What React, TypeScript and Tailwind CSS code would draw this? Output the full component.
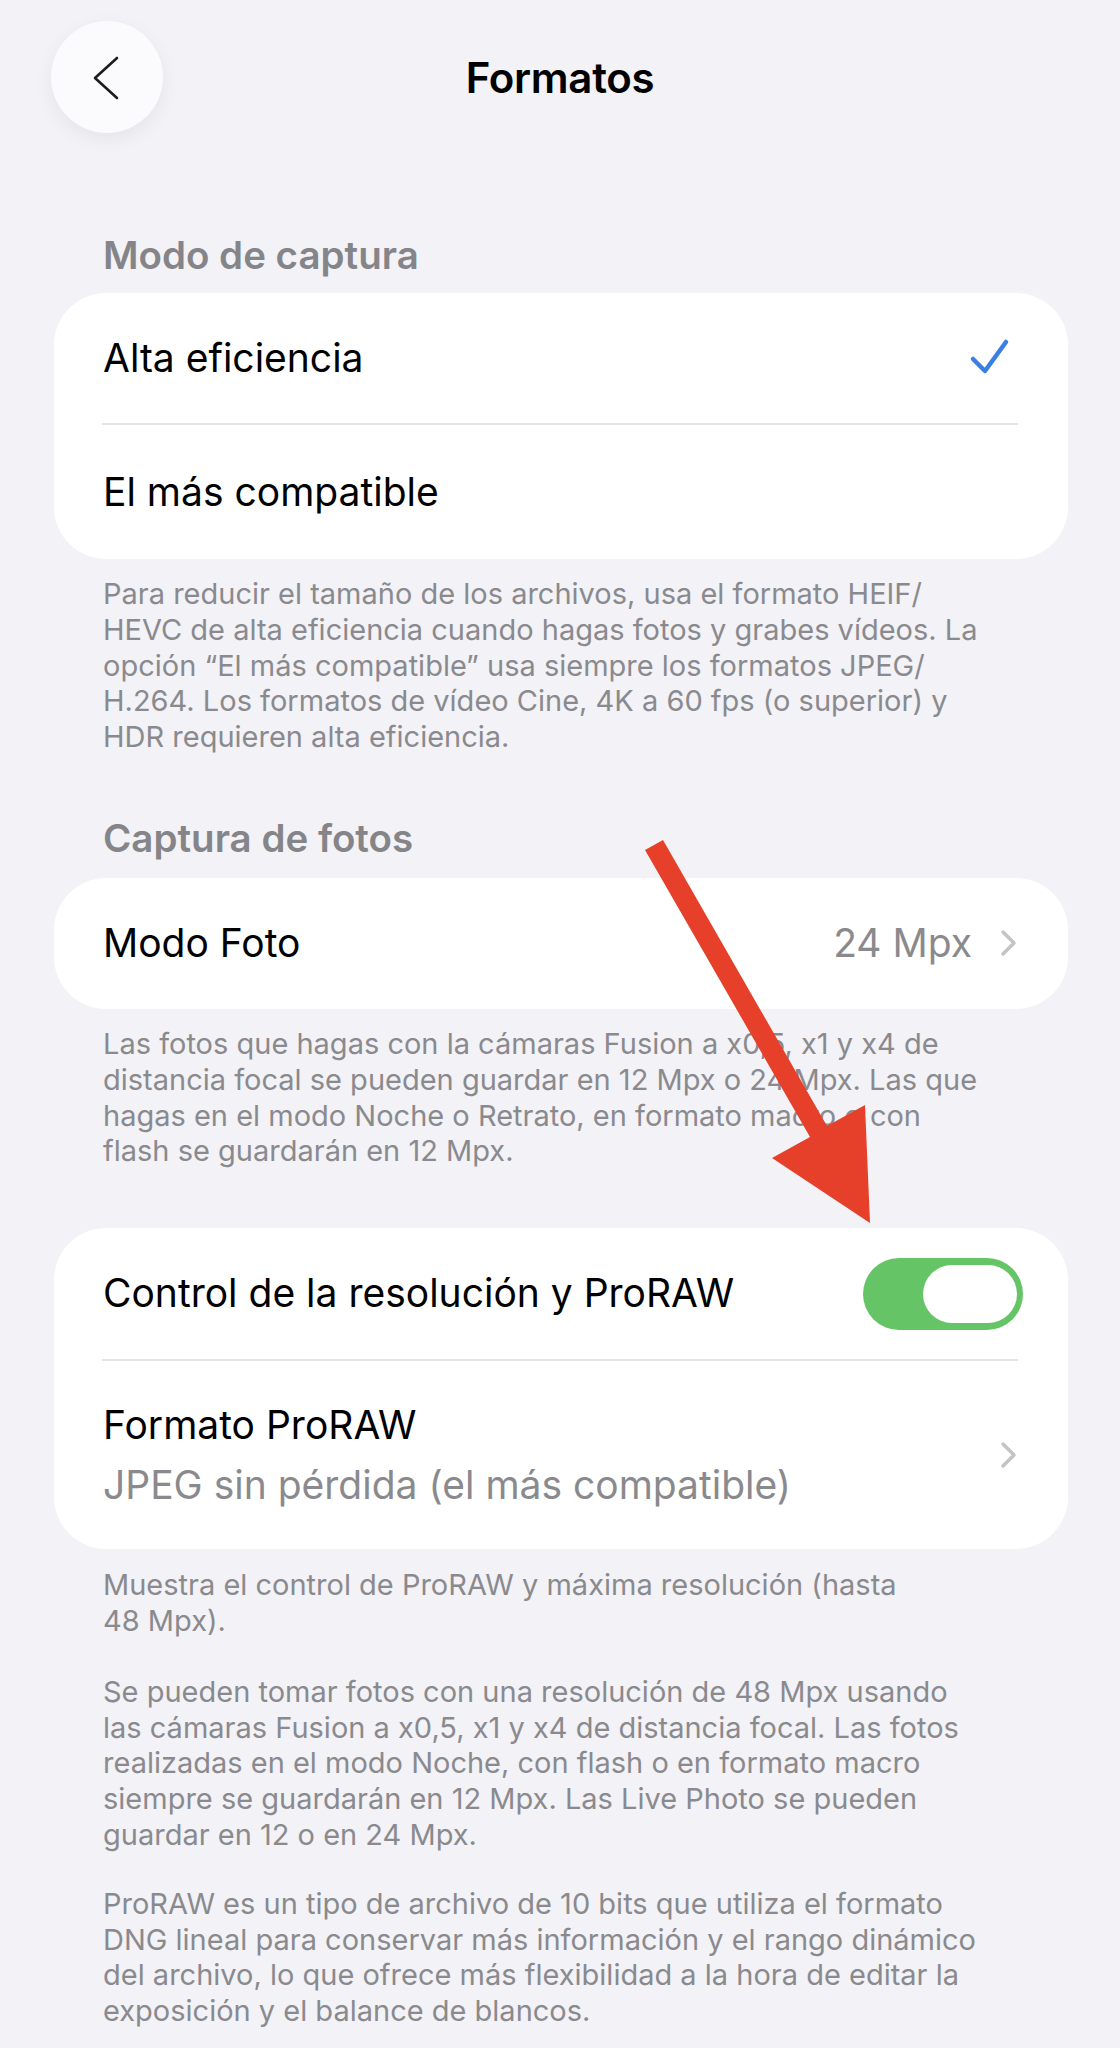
import React from 'react';

const ChevronRight = () => (
  <svg width="20" height="30" viewBox="0 0 20 30" className="shrink-0">
    <polyline points="5,4 16,15 5,26" fill="none" stroke="#C4C4C7" strokeWidth="3.5" strokeLinecap="round" strokeLinejoin="round" />
  </svg>
);

const Footer = ({ lines, className = '' }: { lines: string[]; className?: string }) => (
  <p className={`px-[49px] text-[29px] leading-[35.8px] text-[#8A8A8E] ${className}`}>
    {lines.map((l, i) => (
      <span key={i} className="block whitespace-nowrap">{l}</span>
    ))}
  </p>
);

const Header = ({ children, className = '' }: { children: React.ReactNode; className?: string }) => (
  <h3 className={`text-[38.5px] leading-[46px] font-semibold text-[#858589] ${className}`}>{children}</h3>
);

export default function App() {
  return (
    <div className="relative min-h-[2048px] bg-[#F2F2F7] font-['Inter','Noto_Sans',sans-serif] text-black overflow-hidden">
      {/* nav */}
      <div className="grid grid-cols-[1fr_auto_1fr] items-center pt-[21px] px-[51px]">
        <button className="w-[112px] h-[112px] rounded-full bg-[#FBFBFD] shadow-[0_6px_20px_rgba(0,0,0,0.06)] flex items-center justify-center">
          <svg width="40" height="50" viewBox="0 0 40 50">
            <polyline points="30,6 8,26 30,46" fill="none" stroke="#1C1C1E" strokeWidth="2.6" strokeLinecap="round" strokeLinejoin="round" />
          </svg>
        </button>
        <h1 className="text-[42px] font-semibold tracking-[-0.3px]">Formatos</h1>
        <div />
      </div>

      <Header className="mt-[99px] mb-[15px] pl-[103px]">Modo de captura</Header>
      <div className="px-[54px] pr-[52px]">
        <div className="bg-white rounded-[52px] overflow-hidden">
          <div className="h-[130px] flex items-center justify-between pl-[49px] pr-[56px]">
            <span className="text-[39px]">Alta eficiencia</span>
            <svg width="44" height="44" viewBox="0 0 44 44">
              <polyline points="5,23 17,35 38,6" fill="none" stroke="#3A80E4" strokeWidth="4.5" strokeLinecap="round" strokeLinejoin="round" />
            </svg>
          </div>
          <div className="ml-[48px] mr-[50px] h-[2px] bg-[#E3E3E8]" />
          <div className="h-[134px] flex items-center pl-[49px]">
            <span className="text-[39px]">El más compatible</span>
          </div>
        </div>
      </div>

      <Footer
        className="mt-[17px] pl-[103px]"
        lines={[
          'Para reducir el tamaño de los archivos, usa el formato HEIF/',
          'HEVC de alta eficiencia cuando hagas fotos y grabes vídeos. La',
          'opción “El más compatible” usa siempre los formatos JPEG/',
          'H.264. Los formatos de vídeo Cine, 4K a 60 fps (o superior) y',
          'HDR requieren alta eficiencia.',
        ]}
      />

      <Header className="mt-[60px] mb-[17px] pl-[103px]">Captura de fotos</Header>
      <div className="px-[54px] pr-[52px]">
        <div className="bg-white rounded-[52px] h-[131px] flex items-center pl-[49px] pr-[50px]">
          <span className="text-[39px] flex-1">Modo Foto</span>
          <span className="text-[39px] text-[#8A8A8E] mr-[26px]">24 Mpx</span>
          <ChevronRight />
        </div>
      </div>

      <Footer
        className="mt-[17px] pl-[103px]"
        lines={[
          'Las fotos que hagas con la cámaras Fusion a x0,5, x1 y x4 de',
          'distancia focal se pueden guardar en 12 Mpx o 24 Mpx. Las que',
          'hagas en el modo Noche o Retrato, en formato macro o con',
          'flash se guardarán en 12 Mpx.',
        ]}
      />

      <div className="px-[54px] pr-[52px] mt-[59px]">
        <div className="bg-white rounded-[52px] overflow-hidden">
          <div className="h-[131px] flex items-center justify-between pl-[49px] pr-[45px]">
            <span className="text-[39px]">Control de la resolución y ProRAW</span>
            <div className="w-[160px] h-[72px] rounded-full bg-[#65C466] flex items-center justify-end pr-[6px]">
              <div className="w-[94px] h-[58px] rounded-full bg-white" />
            </div>
          </div>
          <div className="ml-[48px] mr-[50px] h-[2px] bg-[#E3E3E8]" />
          <div className="h-[188px] flex items-center justify-between pl-[49px] pr-[50px]">
            <div className="flex flex-col gap-[12px]">
              <span className="text-[39px] leading-[48px]">Formato ProRAW</span>
              <span className="text-[39px] leading-[48px] text-[#8A8A8E]">JPEG sin pérdida (el más compatible)</span>
            </div>
            <ChevronRight />
          </div>
        </div>
      </div>

      <Footer
        className="mt-[18px] pl-[103px]"
        lines={['Muestra el control de ProRAW y máxima resolución (hasta', '48 Mpx).']}
      />
      <Footer
        className="mt-[35px] pl-[103px]"
        lines={[
          'Se pueden tomar fotos con una resolución de 48 Mpx usando',
          'las cámaras Fusion a x0,5, x1 y x4 de distancia focal. Las fotos',
          'realizadas en el modo Noche, con flash o en formato macro',
          'siempre se guardarán en 12 Mpx. Las Live Photo se pueden',
          'guardar en 12 o en 24 Mpx.',
        ]}
      />
      <Footer
        className="mt-[33px] pl-[103px]"
        lines={[
          'ProRAW es un tipo de archivo de 10 bits que utiliza el formato',
          'DNG lineal para conservar más información y el rango dinámico',
          'del archivo, lo que ofrece más flexibilidad a la hora de editar la',
          'exposición y el balance de blancos.',
        ]}
      />

      {/* red annotation arrow */}
      <svg className="absolute left-0 top-0 pointer-events-none" width="1120" height="2048" viewBox="0 0 1120 2048">
        <polygon
          points="645,850 663,840 827,1126 865,1105 870,1223 772,1158 810,1137"
          fill="#E6402A"
        />
      </svg>
    </div>
  );
}
